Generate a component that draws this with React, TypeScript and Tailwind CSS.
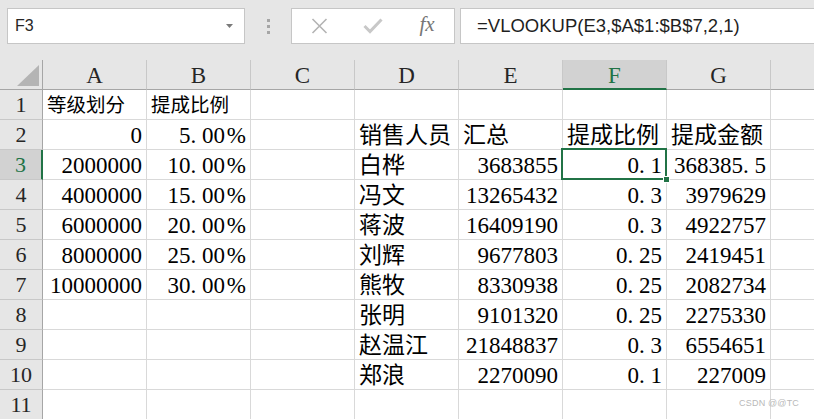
import React from "react";

const COLS = ["A", "B", "C", "D", "E", "F", "G"];

// one array per row, A..G
const ROWS: string[][] = [
  ["等级划分", "提成比例", "", "", "", "", ""],
  ["0", "5.00%", "", "销售人员", "汇总", "提成比例", "提成金额"],
  ["2000000", "10.00%", "", "白桦", "3683855", "0.1", "368385.5"],
  ["4000000", "15.00%", "", "冯文", "13265432", "0.3", "3979629"],
  ["6000000", "20.00%", "", "蒋波", "16409190", "0.3", "4922757"],
  ["8000000", "25.00%", "", "刘辉", "9677803", "0.25", "2419451"],
  ["10000000", "30.00%", "", "熊牧", "8330938", "0.25", "2082734"],
  ["", "", "", "张明", "9101320", "0.25", "2275330"],
  ["", "", "", "赵温江", "21848837", "0.3", "6554651"],
  ["", "", "", "郑浪", "2270090", "0.1", "227009"],
  ["", "", "", "", "", "", ""],
];

const SEL_ROW = 3;
const SEL_COL = 5;

const isNum = (s: string) => /^[\d.%]+$/.test(s);

/** Excel's Song face draws the period and percent wider than Liberation Serif does. */
function NumText({ s }: { s: string }) {
  return (
    <>
      {s.split("").map((ch, i) =>
        ch === "." ? (
          <span key={i} className="mr-[0.25em]">.</span>
        ) : ch === "%" ? (
          <span key={i} className="ml-[0.08em]">%</span>
        ) : (
          ch
        ),
      )}
    </>
  );
}

function Cell({ value, row, col }: { value: string; row: number; col: number }) {
  const num = isNum(value);
  const selected = row === SEL_ROW && col === SEL_COL;
  return (
    <div
      className={`relative h-[30px] w-[104px] shrink-0 border-b border-r border-[#d9d9d9] bg-white px-[4px] leading-[31px] whitespace-nowrap text-black ${
        num ? "text-right" : "text-left"
      } ${row === 1 ? "text-[19.5px]" : "text-[23px]"}`}
    >
      {num ? <NumText s={value} /> : value}
      {selected && (
        <>
          <div className="absolute -left-[2px] -top-[2px] -right-[1px] -bottom-[1px] z-10 border-2 border-[#217346]" />
          <div className="absolute -right-[4px] -bottom-[4px] z-20 h-[7px] w-[7px] border border-white bg-[#217346]" />
        </>
      )}
    </div>
  );
}

function XIcon() {
  return (
    <svg width="17" height="16" viewBox="0 0 17 16" fill="none" stroke="#b4b4b4" strokeWidth="1.6">
      <path d="M1.5 1 L15.5 15 M15.5 1 L1.5 15" />
    </svg>
  );
}

function CheckIcon() {
  return (
    <svg width="20" height="16" viewBox="0 0 20 16" fill="none" stroke="#c8c8c8" strokeWidth="3" strokeLinejoin="miter">
      <path d="M1.5 8 L7 13.5 L18.5 1.5" />
    </svg>
  );
}

export default function App() {
  return (
    <div className="relative h-[419px] w-[814px] overflow-hidden bg-[#e6e6e6] font-['Liberation_Serif','Noto_Sans_CJK_SC',serif]">
      {/* formula bar */}
      <div className="flex h-[60px] items-start pl-[7px] pt-[8px]">
        <div className="flex h-[36px] w-[238px] items-center justify-between border border-[#c6c6c6] bg-white pl-[7px] pr-[11px] font-['Liberation_Sans',sans-serif] text-[16px] text-[#262626]">
          <span>F3</span>
          <svg width="7" height="4" viewBox="0 0 7 4">
            <path d="M0 0 H7 L3.5 4 Z" fill="#7a7a7a" />
          </svg>
        </div>
        <div className="flex h-[36px] w-[46px] flex-col items-center justify-center gap-[3px]">
          <span className="h-[3px] w-[3px] bg-[#a6a6a6]" />
          <span className="h-[3px] w-[3px] bg-[#a6a6a6]" />
          <span className="h-[3px] w-[3px] bg-[#a6a6a6]" />
        </div>
        <div className="flex h-[36px] items-center border border-[#c6c6c6] bg-white">
          <div className="flex w-[54px] justify-center">
            <XIcon />
          </div>
          <div className="flex w-[54px] justify-center">
            <CheckIcon />
          </div>
          <div className="flex w-[54px] justify-center pb-[2px] font-['Liberation_Serif',serif] text-[21px] italic text-[#767676]">
            fx
          </div>
        </div>
        <div className="ml-[5px] flex h-[36px] flex-1 items-center border border-r-0 border-[#c6c6c6] bg-white pl-[16px] font-['Liberation_Sans',sans-serif] text-[18.5px] text-[#1f1f1f]">
          =VLOOKUP(E3,$A$1:$B$7,2,1)
        </div>
      </div>

      {/* column headers */}
      <div className="flex h-[30px]">
        <div className="flex h-[30px] w-[43px] shrink-0 items-end justify-end border-b border-r border-[#a6a6a6] pb-[3px] pr-[3px]">
          <svg width="22" height="21" viewBox="0 0 22 21">
            <path d="M22 0 V21 H0 Z" fill="#b4b4b4" />
          </svg>
        </div>
        {COLS.map((c, i) => (
          <div
            key={c}
            className={`h-[30px] w-[104px] shrink-0 border-r border-[#c8c8c8] text-center text-[23px] leading-[31px] ${
              i === SEL_COL
                ? "border-b-2 border-b-[#217346] bg-[#d2d2d2] text-[#217346]"
                : "border-b border-b-[#a6a6a6] text-[#262626]"
            }`}
          >
            {c}
          </div>
        ))}
        <div className="h-[30px] flex-1 border-b border-[#a6a6a6]" />
      </div>

      {/* rows */}
      {ROWS.map((cells, r) => {
        const row = r + 1;
        const sel = row === SEL_ROW;
        return (
          <div key={row} className="flex h-[30px]">
            <div
              className={`h-[30px] w-[43px] shrink-0 border-b border-b-[#c8c8c8] text-center text-[22px] leading-[30px] ${
                sel
                  ? "border-r-2 border-r-[#217346] bg-[#d2d2d2] text-[#217346]"
                  : "border-r border-r-[#a6a6a6] text-[#262626]"
              }`}
            >
              {row}
            </div>
            {cells.map((v, c) => (
              <Cell key={c} value={v} row={row} col={c} />
            ))}
            <div className="h-[30px] flex-1 border-b border-[#d9d9d9] bg-white" />
          </div>
        );
      })}

      <div className="absolute bottom-[9px] right-[15px] font-['Liberation_Sans',sans-serif] text-[9px] tracking-[0.02em] text-[#b9b9b9]">
        CSDN @@TC
      </div>
    </div>
  );
}
